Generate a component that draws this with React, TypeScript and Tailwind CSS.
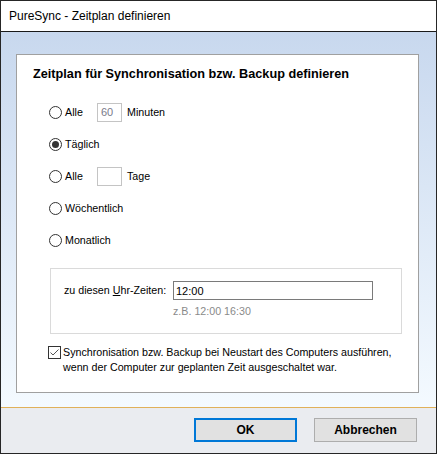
import { useState } from 'react'

function Radio({ checked }: { checked?: boolean }) {
  return (
    <span className="w-[13px] h-[13px] rounded-full border border-[#333333] bg-white flex items-center justify-center shrink-0">
      {checked && <span className="w-[7px] h-[7px] rounded-full bg-[#333333]" />}
    </span>
  )
}

export default function App() {
  const [mode, setMode] = useState(1)
  const [times, setTimes] = useState('12:00')

  const rows = [
    { label: 'Alle', input: '60', unit: 'Minuten', disabled: true },
    { label: 'Täglich' },
    { label: 'Alle', input: '', unit: 'Tage' },
    { label: 'Wöchentlich' },
    { label: 'Monatlich' },
  ]

  return (
    <div className="w-[437px] h-[454px] flex flex-col border border-[#262626] font-['Liberation_Sans',Arial,sans-serif] text-[10.7px] text-black">
      {/* Title bar */}
      <div className="h-[31px] shrink-0 bg-white border-b border-[#1a1a1a] flex items-center pl-[8px] text-[12px]">
        PureSync - Zeitplan definieren
      </div>

      {/* Body */}
      <div className="flex-1 bg-linear-to-b from-[#c8d8ee] to-[#f4faff] pl-[15px] pr-[17px] pt-[22px] pb-[14px]">
        <div className="h-[339px] bg-white border border-[#a0a0a0] flex flex-col">
          <div className="pl-[16px] pt-[10px] h-[41px] text-[12.7px] font-bold">
            Zeitplan für Synchronisation bzw. Backup definieren
          </div>

          {rows.map((r, i) => (
            <div
              key={i}
              onClick={() => setMode(i)}
              className="h-[32px] flex items-center pl-[32px] cursor-default"
            >
              <Radio checked={mode === i} />
              {r.unit ? (
                <>
                  <span className="ml-[3px] w-[32px]">{r.label}</span>
                  <input
                    defaultValue={r.input}
                    className={`w-[25px] h-[19px] border border-[#c4c4c4] px-[3px] text-[11px] outline-none ${r.disabled ? 'text-[#7a7a8a]' : 'text-black'}`}
                  />
                  <span className="ml-[5px]">{r.unit}</span>
                </>
              ) : (
                <span className="ml-[3px]">{r.label}</span>
              )}
            </div>
          ))}

          {/* Uhr-Zeiten group */}
          <div className="mt-[12px] ml-[33px] mr-[16px] h-[66px] border border-[#dadada] pl-[13px] pt-[12px]">
            <div className="flex items-center">
              <span className="w-[109px]">
                zu diesen <span className="underline">U</span>hr-Zeiten:
              </span>
              <input
                value={times}
                onChange={(e) => setTimes(e.target.value)}
                className="w-[200px] h-[19px] border border-[#7a7a7a] px-[2px] text-[11px] outline-none"
              />
            </div>
            <div className="ml-[109px] mt-[3px] text-[#8a8a8a]">z.B. 12:00 16:30</div>
          </div>

          {/* Checkbox */}
          <div className="mt-[11px] ml-[31px] flex items-start leading-[15px]">
            <span className="w-[13px] h-[13px] border border-[#333333] bg-white mt-[1px] shrink-0 flex items-center justify-center">
              <svg width="11" height="11" viewBox="0 0 11 11" fill="none" stroke="#555" strokeWidth="1">
                <path d="M1.5 5.5 4 8 9.5 2.5" />
              </svg>
            </span>
            <span className="ml-[2px]">
              Synchronisation bzw. Backup bei Neustart des Computers ausführen,
              <br />
              wenn der Computer zur geplanten Zeit ausgeschaltet war.
            </span>
          </div>
        </div>
      </div>

      {/* Footer */}
      <div className="h-[46px] shrink-0 border-t border-[#e0b15a] bg-[#eaecf0] flex justify-end items-start pt-[10px] pr-[19px] gap-[17px]">
        <button className="w-[103px] h-[24px] bg-[#e1e1e1] border-2 border-[#0078d7] text-[12px] font-bold">
          OK
        </button>
        <button className="w-[103px] h-[24px] bg-[#e1e1e1] border border-[#adadad] text-[12px] font-bold">
          Abbrechen
        </button>
      </div>
    </div>
  )
}
